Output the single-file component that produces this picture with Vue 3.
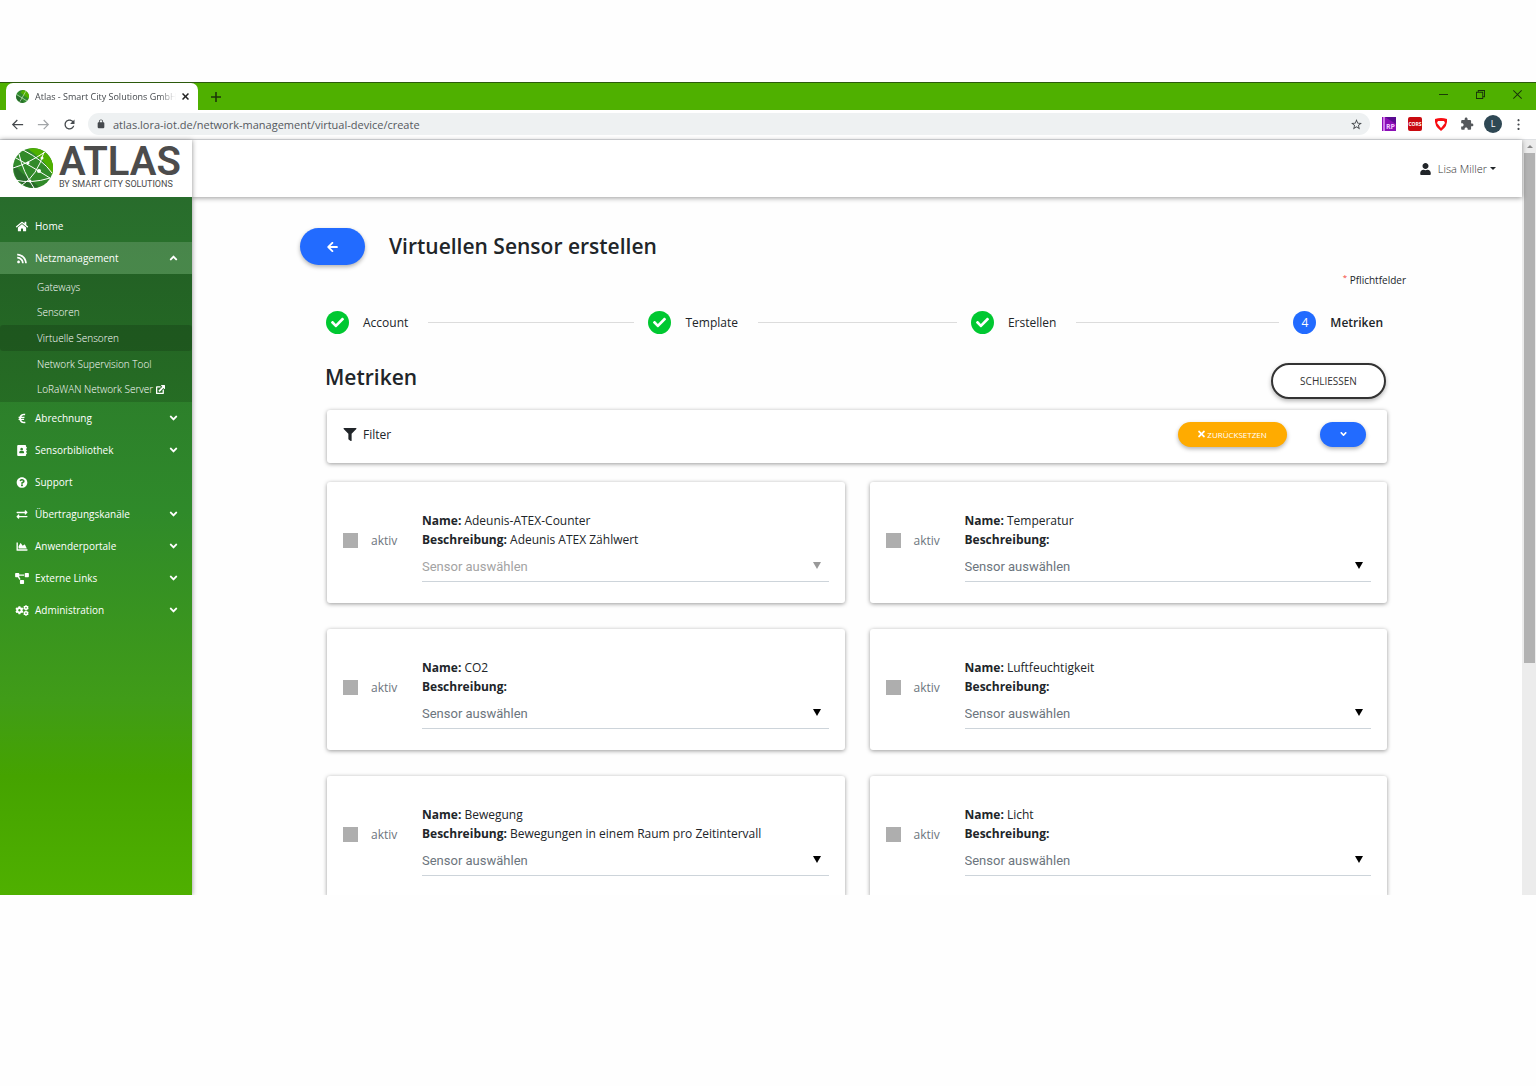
<template>
	<div class="screen">
		<div class="browser">
			<div class="tabstrip">
				<div class="tab">
					<svg class="favicon" viewBox="0 0 40 40" aria-hidden="true">
						<circle cx="20" cy="20" r="20" fill="#2f8a2c" />
						<path d="M22 0A20 20 0 0 1 39 26L26 18 14 8z" fill="#4fb000" />
						<path d="M1 16L14 24 24 39A20 20 0 0 1 1 16z" fill="#286c2a" />
						<path d="M2 14L34 34M12 36L30 4" stroke="#d5ead0" stroke-width="2" fill="none" />
					</svg>
					<span class="tab-title">Atlas - Smart City Solutions GmbH</span>
					<button class="plain" aria-label="Tab schließen"><Icon name="cross" class="tab-close" /></button>
				</div>
				<button class="plain newtab" aria-label="Neuer Tab"><Icon name="plus" /></button>
				<div class="window-buttons">
					<button class="plain" aria-label="Minimieren"><Icon name="minimize" /></button>
					<button class="plain" aria-label="Verkleinern"><Icon name="restore" /></button>
					<button class="plain" aria-label="Schließen"><Icon name="thincross" /></button>
				</div>
			</div>

			<div class="toolbar">
				<button class="plain nav" aria-label="Zurück"><Icon name="back" /></button>
				<button class="plain nav faded" aria-label="Vorwärts"><Icon name="forward" /></button>
				<button class="plain nav" aria-label="Neu laden"><Icon name="reload" /></button>
				<div class="address">
					<Icon name="lock" class="lock" />
					<input v-model="url" type="text" aria-label="Adresse" />
					<button class="plain" aria-label="Lesezeichen"><Icon name="star" class="star" /></button>
				</div>
				<div class="extensions">
					<svg viewBox="0 0 14 14" aria-hidden="true">
						<path d="M0 0h14v14H0z" fill="#8a0fb5" />
						<path d="M3 0h11v7z" fill="#5a0a91" />
						<path d="M1 0h2v14H1z" fill="#d07be8" />
						<text x="4" y="12" font-size="7" font-weight="700" fill="#f3c6ff">RP</text>
					</svg>
					<svg viewBox="0 0 14 14" aria-hidden="true">
						<rect width="14" height="14" rx="2" fill="#c90a10" />
						<text x="7" y="9" font-size="5" font-weight="700" text-anchor="middle" fill="#fff">CORS</text>
					</svg>
					<svg viewBox="0 0 14 14" aria-hidden="true">
						<path d="M1 2q6-2 12 0 1 7-6 12Q0 9 1 2z" fill="#f80d12" />
						<path d="M4 4h6l1 2-4 5-4-5z" fill="#fff" />
					</svg>
					<svg viewBox="0 0 24 24" aria-hidden="true"><path :d="icons.puzzle.d" fill="#55585c" /></svg>
				</div>
				<span class="profile">L</span>
				<button class="plain" aria-label="Menü"><Icon name="dots" class="dots" /></button>
			</div>

			<div class="viewport">
				<aside class="sidebar">
					<div class="logo">
						<svg class="globe" viewBox="0 0 40 40" aria-hidden="true">
							<circle cx="20" cy="20" r="20" fill="#318a2a" />
							<path d="M15 1A20 20 0 0 1 39 27Q34 17 29 12 22 6 15 1z" fill="#4fb000" />
							<path d="M1 17L9 25 18 32 26 39A20 20 0 0 1 1 17z" fill="#286c2a" />
							<g stroke="#fff" stroke-width="1" fill="none">
								<path d="M0 20Q14 16 32 4M6 6Q10 24 21 40M10 2Q30 12 39 25M9 37Q24 28 31 4M2 32Q18 36 37 30M3 10Q18 18 37 30" />
							</g>
							<g fill="#fff">
								<circle cx="15" cy="15" r="1.500" />
								<circle cx="26" cy="23" r="2" />
								<circle cx="29" cy="10" r="1.500" />
								<circle cx="17" cy="33" r="1.500" />
							</g>
						</svg>
						<div class="logo-text">
							<strong>ATLAS</strong>
							<span>BY SMART CITY SOLUTIONS</span>
						</div>
					</div>
					<nav>
						<template v-for="item in menu" :key="item.label">
							<a href="#" class="menu-item" :class="{ open: item.children }">
								<Icon :name="item.icon" class="menu-icon" />
								<span>{{ item.label }}</span>
								<Icon v-if="item.children" name="up" class="chevron" />
								<Icon v-else-if="item.expandable" name="down" class="chevron" />
							</a>
							<div v-if="item.children" class="submenu">
								<a v-for="child in item.children" :key="child" href="#" :class="{ current: child === 'Virtuelle Sensoren' }">
									{{ child }}
									<Icon v-if="child === 'LoRaWAN Network Server'" name="external" class="external" />
								</a>
							</div>
						</template>
					</nav>
				</aside>

				<div class="page">
					<header>
						<button class="plain user">
							<Icon name="user" class="user-icon" />
							<span>Lisa Miller</span>
							<i class="caret"></i>
						</button>
					</header>
					<main>
						<div class="title-row">
							<button class="pill back-button" aria-label="Zurück"><Icon name="arrowLeft" /></button>
							<h1>Virtuellen Sensor erstellen</h1>
						</div>
						<p class="required"><sup>*</sup> Pflichtfelder</p>

						<ol class="stepper">
							<li v-for="(step, i) in steps" :key="step" :class="{ active: i === 3 }">
								<span class="dot">
									<Icon v-if="i < 3" name="check" />
									<template v-else>{{ i + 1 }}</template>
								</span>
								<span>{{ step }}</span>
							</li>
						</ol>

						<div class="inner">
							<div class="section-head">
								<h2>Metriken</h2>
								<button class="pill close-button">SCHLIESSEN</button>
							</div>

							<div class="card filter">
								<Icon name="filter" class="filter-icon" />
								<span class="filter-label">Filter</span>
								<button class="pill reset"><Icon name="times" /> ZURÜCKSETZEN</button>
								<button class="pill expand" aria-label="Filter anzeigen"><Icon name="down" /></button>
							</div>

							<div class="metrics">
								<div v-for="(metric, i) in metrics" :key="metric.name" class="card metric">
									<label class="toggle">
										<input v-model="metric.active" type="checkbox" />
										<span>aktiv</span>
									</label>
									<div class="info">
										<p><b>Name:</b> {{ metric.name }}</p>
										<p><b>Beschreibung:</b> {{ metric.description }}</p>
										<div class="select" :class="{ disabled: metric.disabled }">
											<select :id="'sensor' + i" :disabled="metric.disabled" :aria-label="'Sensor für ' + metric.name">
												<option>Sensor auswählen</option>
											</select>
										</div>
									</div>
								</div>
							</div>
						</div>
					</main>
				</div>

				<div class="scrollbar">
					<i class="scroll-up"></i>
					<div class="thumb"></div>
				</div>
			</div>
		</div>
	</div>
</template>

<script setup>
import { h, reactive, ref } from 'vue';

const icons = {
	home: { w: 576, d: 'M280.37 148.26L96 300.11V464a16 16 0 0 0 16 16l112.06-.29a16 16 0 0 0 15.92-16V368a16 16 0 0 1 16-16h64a16 16 0 0 1 16 16v95.64a16 16 0 0 0 16 16.05L464 480a16 16 0 0 0 16-16V300L295.67 148.26a12.19 12.19 0 0 0-15.3 0zM571.6 251.47L488 182.56V44.05a12 12 0 0 0-12-12h-56a12 12 0 0 0-12 12v72.61L318.47 43a48 48 0 0 0-61 0L4.34 251.47a12 12 0 0 0-1.6 16.9l25.5 31A12 12 0 0 0 45.15 301l235.22-193.74a12.19 12.19 0 0 1 15.3 0L530.9 301a12 12 0 0 0 16.9-1.6l25.5-31a12 12 0 0 0-1.7-16.93z' },
	rss: { w: 448, d: 'M128.081 415.959c0 35.369-28.672 64.041-64.041 64.041S0 451.328 0 415.959s28.672-64.041 64.041-64.041 64.04 28.673 64.04 64.041zm175.66 47.25c-8.354-154.6-132.185-278.587-286.95-286.95C7.656 175.765 0 183.105 0 192.253v48.069c0 8.415 6.49 15.472 14.887 16.018 111.832 7.284 201.473 96.702 208.772 208.772.547 8.397 7.604 14.887 16.018 14.887h48.069c9.149.001 16.489-7.655 15.995-16.79zm144.249.288C439.596 229.677 251.465 40.445 16.503 32.01 7.473 31.686 0 38.981 0 48.016v48.068c0 8.625 6.835 15.645 15.453 15.999 191.179 7.839 344.627 161.316 352.465 352.465.353 8.618 7.373 15.453 15.999 15.453h48.068c9.034-.001 16.329-7.474 16.005-16.504z' },
	euro: { w: 320, d: 'M310.706 413.765c-1.314-6.63-7.835-10.872-14.424-9.369-10.692 2.439-27.422 5.413-45.426 5.413-56.763 0-101.929-34.79-121.461-85.449h113.689a12 12 0 0 0 11.708-9.369l6.373-28.36c1.686-7.502-4.019-14.631-11.708-14.631H115.22c-1.21-14.328-1.414-28.287.137-42.245H261.95a12 12 0 0 0 11.723-9.434l6.512-29.755c1.638-7.484-4.061-14.566-11.723-14.566H130.184c20.633-44.991 62.69-75.03 117.619-75.03 14.486 0 28.564 2.25 37.851 4.145 6.216 1.268 12.347-2.498 14.002-8.623l11.991-44.368c1.822-6.741-2.465-13.616-9.326-14.917C290.217 34.912 270.71 32 249.635 32 152.451 32 74.03 92.252 45.075 176H12c-6.627 0-12 5.373-12 12v29.755c0 6.627 5.373 12 12 12h21.569c-1.009 13.607-1.181 29.287-.181 42.245H12c-6.627 0-12 5.373-12 12v28.36c0 6.627 5.373 12 12 12h30.114C67.139 414.692 145.264 480 249.635 480c26.301 0 48.562-4.544 61.101-7.788 6.167-1.595 10.027-7.708 8.788-13.957l-8.818-44.49z' },
	book: { w: 448, d: 'M48 0h320a48 48 0 0 1 48 48v48h20q12 0 12 12v40q0 12-12 12h-20v64h20q12 0 12 12v40q0 12-12 12h-20v64h20q12 0 12 12v40q0 12-12 12h-20v48a48 48 0 0 1-48 48H48a48 48 0 0 1-48-48V48A48 48 0 0 1 48 0zM208 128a64 64 0 1 0 .1 0zM163 272c-35 4-67 28-67 70v22q0 20 22 20h180q22 0 22-20v-22c0-42-32-66-67-70q-45 22-90 0z' },
	question: { w: 512, d: 'M504 256c0 136.997-111.043 248-248 248S8 392.997 8 256C8 119.083 119.043 8 256 8s248 111.083 248 248zM262.655 90c-54.497 0-89.255 22.957-116.549 63.758-3.536 5.286-2.353 12.415 2.715 16.258l34.699 26.31c5.205 3.947 12.621 3.008 16.665-2.122 17.864-22.658 30.113-35.797 57.303-35.797 20.429 0 45.698 13.148 45.698 32.958 0 14.976-12.363 22.667-32.534 33.976C247.128 238.528 216 254.941 216 296v4c0 6.627 5.373 12 12 12h56c6.627 0 12-5.373 12-12v-1.333c0-28.462 83.186-29.647 83.186-106.667 0-58.002-60.165-102-116.531-102zM256 338c-25.365 0-46 20.635-46 46 0 25.364 20.635 46 46 46s46-20.636 46-46c0-25.365-20.635-46-46-46z' },
	exchange: { w: 512, d: 'M0 168v-16c0-13.255 10.745-24 24-24h360V80c0-21.367 25.899-32.042 40.971-16.971l80 80c9.372 9.373 9.372 24.569 0 33.941l-80 80C409.956 271.982 384 261.456 384 240v-48H24c-13.255 0-24-10.745-24-24zm488 152H128v-48c0-21.314-25.862-32.08-40.971-16.971l-80 80c-9.372 9.373-9.372 24.569 0 33.941l80 80C102.057 463.997 128 453.437 128 432v-48h360c13.255 0 24-10.745 24-24v-16c0-13.255-10.745-24-24-24z' },
	chart: { w: 512, d: 'M500 384c6.6 0 12 5.4 12 12v40c0 6.6-5.4 12-12 12H12c-6.6 0-12-5.4-12-12V76c0-6.6 5.4-12 12-12h40c6.6 0 12 5.4 12 12v308h436zM372.7 159.5L288 216l-85.3-113.7c-5.1-6.8-15.5-6.3-19.9 1L96 248v104h384l-89.9-187.8c-3.2-6.5-11.4-8.7-17.4-4.7z' },
	diagram: { w: 640, d: 'M384 320H256c-17.67 0-32 14.33-32 32v128c0 17.67 14.33 32 32 32h128c17.67 0 32-14.33 32-32V352c0-17.67-14.33-32-32-32zM192 32c0-17.67-14.33-32-32-32H32C14.33 0 0 14.33 0 32v128c0 17.67 14.33 32 32 32h95.72l73.16 128.04C211.98 300.98 232.4 288 256 288h.28L192 175.51V128h224V64H192V32zM608 0H480c-17.67 0-32 14.33-32 32v128c0 17.67 14.33 32 32 32h128c17.67 0 32-14.33 32-32V32c0-17.67-14.33-32-32-32z' },
	cogs: { w: 640, d: 'M156 56h86l10 50 40 23 48-17 43 74-38 34v46l38 34-43 74-48-17-40 23-10 50h-86l-10-50-40-23-48 17-43-74 38-34v-46l-38-34 43-74 48 17 40-23zM199 188a56 56 0 1 0 .1 0zM476 6h60l7 32 24 14 32-10 30 52-24 22v24l24 22-30 52-32-10-24 14-7 32h-60l-7-32-24-14-32 10-30-52 24-22v-24l-24-22 30-52 32 10 24-14zM506 96a32 32 0 1 0 .1 0zM476 262h60l7 32 24 14 32-10 30 52-24 22v24l24 22-30 52-32-10-24 14-7 32h-60l-7-32-24-14-32 10-30-52 24-22v-24l-24-22 30-52 32 10 24-14zM506 352a32 32 0 1 0 .1 0z' },
	external: { w: 512, d: 'M300 0h190q22 0 22 22v190q-8 24-32 10l-52-52-210 210q-14 12-28 0l-44-44q-12-14 0-28L356 98l-62-62q-14-26 6-36zM48 64h210v74H74v300h300V290l74-50v224q0 48-48 48H48q-48 0-48-48V112q0-48 48-48z' },
	filter: { w: 512, d: 'M487.976 0H24.028C2.71 0-8.047 25.866 7.058 40.971L192 225.941V432c0 7.831 3.821 15.17 10.237 19.662l80 55.98C298.02 518.69 320 507.493 320 487.98V225.941l184.947-184.97C520.021 25.896 509.338 0 487.976 0z' },
	user: { w: 448, d: 'M224 256c70.7 0 128-57.3 128-128S294.7 0 224 0 96 57.3 96 128s57.3 128 128 128zm89.6 32h-16.7c-22.2 10.2-46.9 16-72.9 16s-50.6-5.8-72.9-16h-16.7C60.2 288 0 348.2 0 422.4V464c0 26.5 21.5 48 48 48h352c26.5 0 48-21.5 48-48v-41.6c0-74.2-60.2-134.4-134.4-134.4z' },
	check: { w: 512, d: 'M173.898 439.404l-166.4-166.4c-9.997-9.997-9.997-26.206 0-36.204l36.203-36.204c9.997-9.998 26.207-9.998 36.204 0L192 312.69 432.095 72.596c9.997-9.997 26.207-9.997 36.204 0l36.203 36.204c9.997 9.997 9.997 26.206 0 36.204l-294.4 294.401c-9.998 9.997-26.207 9.997-36.204-.001z' },
	arrowLeft: { w: 448, d: 'M257.5 445.1l-22.2 22.2c-9.4 9.4-24.6 9.4-33.9 0L7 273c-9.4-9.4-9.4-24.6 0-33.9L201.4 44.7c9.4-9.4 24.6-9.4 33.9 0l22.2 22.2c9.5 9.5 9.3 25-.4 34.3L136.6 216H424c13.3 0 24 10.7 24 24v32c0 13.3-10.7 24-24 24H136.6l120.5 114.8c9.8 9.3 10 24.8.4 34.3z' },
	times: { w: 352, d: 'M242.72 256l100.07-100.07c12.28-12.28 12.28-32.19 0-44.48l-22.24-22.24c-12.28-12.28-32.19-12.28-44.48 0L176 189.28 75.93 89.21c-12.28-12.28-32.19-12.28-44.48 0L9.21 111.45c-12.28 12.28-12.28 32.19 0 44.48L109.28 256 9.21 356.07c-12.28 12.28-12.28 32.19 0 44.48l22.24 22.24c12.28 12.28 32.2 12.28 44.48 0L176 322.72l100.07 100.07c12.28 12.28 32.2 12.28 44.48 0l22.24-22.24c12.28-12.28 12.28-32.19 0-44.48L242.72 256z' },
	down: { w: 320, d: 'M143 352.3L7 216.3c-9.4-9.4-9.4-24.6 0-33.9l22.6-22.6c9.4-9.4 24.6-9.4 33.9 0l96.4 96.4 96.4-96.4c9.4-9.4 24.6-9.4 33.9 0l22.6 22.6c9.4 9.4 9.4 24.6 0 33.9l-136 136c-9.2 9.4-24.4 9.4-33.8 0z' },
	up: { w: 320, d: 'M177 159.7l136 136c9.4 9.4 9.4 24.6 0 33.9l-22.6 22.6c-9.4 9.4-24.6 9.4-33.9 0L160 255.9l-96.4 96.4c-9.4 9.4-24.6 9.4-33.9 0L7 329.7c-9.4-9.4-9.4-24.6 0-33.9l136-136c9.4-9.5 24.6-9.5 34-.1z' },
	back: { w: 24, h: 24, d: 'M21 11H6.8l5.6-5.6L11 4l-8 8 8 8 1.4-1.4L6.8 13H21v-2z' },
	forward: { w: 24, h: 24, d: 'M3 11h14.2l-5.6-5.6L13 4l8 8-8 8-1.4-1.4 5.6-5.6H3v-2z' },
	reload: { w: 24, h: 24, d: 'M17.65 6.35C16.2 4.9 14.21 4 12 4c-4.42 0-7.99 3.58-7.99 8s3.57 8 7.99 8c3.73 0 6.84-2.55 7.73-6h-2.08c-.82 2.33-3.04 4-5.65 4-3.31 0-6-2.69-6-6s2.69-6 6-6c1.66 0 3.14.69 4.22 1.78L13 11h7V4l-2.35 2.35z' },
	lock: { w: 24, h: 24, d: 'M18 8h-1V6c0-2.76-2.24-5-5-5S7 3.24 7 6v2H6c-1.1 0-2 .9-2 2v10c0 1.1.9 2 2 2h12c1.1 0 2-.9 2-2V10c0-1.1-.9-2-2-2zM9 8V6c0-1.66 1.34-3 3-3s3 1.34 3 3v2H9z' },
	star: { w: 24, h: 24, d: 'M22 9.24l-7.19-.62L12 2 9.19 8.63 2 9.24l5.46 4.73L5.82 21 12 17.27 18.18 21l-1.63-7.03L22 9.24zM12 15.4l-3.76 2.27 1-4.28-3.32-2.88 4.38-.38L12 6.1l1.71 4.04 4.38.38-3.32 2.88 1 4.28L12 15.4z' },
	puzzle: { w: 24, h: 24, d: 'M20.5 11H19V7c0-1.1-.9-2-2-2h-4V3.5C13 2.12 11.88 1 10.5 1S8 2.12 8 3.5V5H4c-1.1 0-1.99.9-1.99 2v3.8H3.5c1.49 0 2.7 1.21 2.7 2.7s-1.21 2.7-2.7 2.7H2V20c0 1.1.9 2 2 2h3.8v-1.5c0-1.49 1.21-2.7 2.7-2.7 1.49 0 2.7 1.21 2.7 2.7V22H17c1.1 0 2-.9 2-2v-4h1.5c1.38 0 2.5-1.12 2.5-2.5S21.88 11 20.5 11z' },
	dots: { w: 24, h: 24, d: 'M12 2a2 2 0 1 0 .1 0zM12 10a2 2 0 1 0 .1 0zM12 18a2 2 0 1 0 .1 0z' },
	cross: { w: 10, h: 10, d: 'M1.5 0L5 3.5 8.5 0 10 1.5 6.5 5 10 8.5 8.5 10 5 6.5 1.5 10 0 8.5 3.5 5 0 1.5z' },
	plus: { w: 10, h: 10, d: 'M4.2 0h1.6v4.2H10v1.6H5.8V10H4.200V5.800H0V4.200h4.200z' },
	minimize: { w: 10, h: 10, d: 'M0 4.5h10v1H0z' },
	restore: { w: 10, h: 10, d: 'M2 0h8v8H8v2H0V2h2zM3 1v1h5v5h1V1zM1 3v6h6V3z' },
	thincross: { w: 10, h: 10, d: 'M.7 0L5 4.3 9.3 0l.7.7L5.700 5 10 9.300l-.7.7L5 5.700.7 10 0 9.300 4.300 5 0 .7z' },
};

const Icon = ({ name }) => h('svg', {
	viewBox: `0 0 ${icons[name].w} ${icons[name].h || 512}`,
	fill: 'currentColor',
	'fill-rule': 'evenodd',
	'aria-hidden': 'true',
}, [h('path', { d: icons[name].d })]);
Icon.props = ['name'];

const url = ref('atlas.lora-iot.de/network-management/virtual-device/create');

const menu = [
	{ label: 'Home', icon: 'home' },
	{
		label: 'Netzmanagement',
		icon: 'rss',
		children: ['Gateways', 'Sensoren', 'Virtuelle Sensoren', 'Network Supervision Tool', 'LoRaWAN Network Server'],
	},
	{ label: 'Abrechnung', icon: 'euro', expandable: true },
	{ label: 'Sensorbibliothek', icon: 'book', expandable: true },
	{ label: 'Support', icon: 'question' },
	{ label: 'Übertragungskanäle', icon: 'exchange', expandable: true },
	{ label: 'Anwenderportale', icon: 'chart', expandable: true },
	{ label: 'Externe Links', icon: 'diagram', expandable: true },
	{ label: 'Administration', icon: 'cogs', expandable: true },
];

const steps = ['Account', 'Template', 'Erstellen', 'Metriken'];

const metrics = reactive([
	{ name: 'Adeunis-ATEX-Counter', description: 'Adeunis ATEX Zählwert', active: false, disabled: true },
	{ name: 'Temperatur', description: '', active: false },
	{ name: 'CO2', description: '', active: false },
	{ name: 'Luftfeuchtigkeit', description: '', active: false },
	{ name: 'Bewegung', description: 'Bewegungen in einem Raum pro Zeitintervall', active: false },
	{ name: 'Licht', description: '', active: false },
]);
</script>

<style>
body {
	margin: 0;
	background: #fefefe;
}
</style>

<style scoped>
* {
	box-sizing: border-box;
}

.screen {
	height: 100vh;
	padding: 82px 0 191px;
	font-family: "Open Sans", "Noto Sans", sans-serif;
	font-size: 12px;
	color: #212529;
}

.browser {
	height: 100%;
	display: flex;
	flex-direction: column;
	overflow: hidden;
	background: #fff;
}

button, input, select {
	font-family: inherit;
}

button {
	cursor: pointer;
}

svg {
	display: block;
	flex: none;
}

a {
	color: inherit;
	text-decoration: none;
}

.plain {
	border: none;
	background: none;
	padding: 0;
	color: inherit;
}

/* browser frame */
.tabstrip {
	height: 28px;
	flex: none;
	display: flex;
	align-items: center;
	padding-left: 6px;
	background: #4fb000;
	border-top: 1px solid #2c5a0c;
}

.tab {
	align-self: stretch;
	width: 192px;
	display: flex;
	align-items: center;
	padding: 0 9px 1px 10px;
	background: #fff;
	border-radius: 7px 7px 0 0;
	font-size: 9px;
	color: #45494d;
}

.favicon {
	width: 13px;
	height: 13px;
	margin-right: 6px;
}

.tab-title {
	flex: 1;
	overflow: hidden;
	white-space: nowrap;
	margin-right: 6px;
	mask-image: linear-gradient(to right, #000 88%, transparent);
}

.tab-close {
	width: 7px;
	height: 7px;
	color: #222;
}

.newtab {
	margin-left: 13px;
}

.newtab svg {
	width: 10px;
	height: 10px;
	color: #1d3608;
}

.window-buttons {
	margin-left: auto;
	display: flex;
	gap: 28px;
	padding: 0 14px 4px 0;
	color: #17300a;
}

.window-buttons svg {
	width: 9px;
	height: 9px;
}

.toolbar {
	height: 30px;
	flex: none;
	display: flex;
	align-items: center;
	padding: 0 11px 1px 10px;
	border-bottom: 1px solid #dfe1e4;
	color: #45494d;
}

.nav {
	margin-right: 11px;
}

.nav svg {
	width: 15px;
	height: 15px;
}

.faded {
	color: #a3a6a9;
}

.address {
	flex: 1;
	height: 22px;
	display: flex;
	align-items: center;
	padding: 0 7px 0 8px;
	background: #eef1f2;
	border-radius: 11px;
}

.lock {
	width: 10px;
	height: 10px;
	margin-right: 7px;
}

.address input {
	flex: 1;
	border: none;
	outline: none;
	background: none;
	padding: 0;
	font-size: 11px;
	color: #55595e;
}

.star {
	width: 13px;
	height: 13px;
}

.extensions {
	display: flex;
	gap: 12px;
	margin: 0 10px 0 12px;
}

.extensions svg {
	width: 14px;
	height: 14px;
}

.profile {
	width: 18px;
	height: 18px;
	margin-right: 10px;
	border-radius: 50%;
	background: #2f4854;
	color: #fff;
	font-size: 9px;
	line-height: 18px;
	text-align: center;
}

.dots {
	width: 13px;
	height: 13px;
}

.viewport {
	flex: 1;
	min-height: 0;
	display: flex;
}

/* sidebar */
.sidebar {
	width: 192px;
	flex: none;
	display: flex;
	flex-direction: column;
	box-shadow: 0 0 5px rgba(0, 0, 0, 0.45);
	z-index: 2;
}

.logo {
	height: 57px;
	display: flex;
	align-items: center;
	gap: 6px;
	padding: 0 0 2px 13px;
	background: #fff;
	color: #4c4c4c;
}

.globe {
	width: 40px;
	height: 40px;
}

.logo-text {
	font-family: Roboto, sans-serif;
}

.logo-text strong {
	display: block;
	font-size: 40px;
	font-weight: 600;
	line-height: 33px;
}

.logo-text span {
	display: block;
	font-size: 9px;
	line-height: 12px;
	white-space: nowrap;
}

nav {
	flex: 1;
	padding-top: 13px;
	background: linear-gradient(#286c2c, #2f8a2a 45%, #409c18 72%, #45a300 83%, #4fb000);
	color: #fff;
	font-size: 10px;
}

.menu-item {
	height: 32px;
	display: flex;
	align-items: center;
	padding: 0 14px 0 15px;
}

.menu-item span {
	flex: 1;
}

.menu-item.open {
	background: rgba(255, 255, 255, 0.15);
}

.menu-icon {
	height: 11px;
	width: 14px;
	margin-right: 6px;
}

.chevron {
	height: 12px;
	width: 9px;
}

.submenu {
	height: 128px;
	display: flex;
	flex-direction: column;
	background: rgba(0, 0, 0, 0.15);
}

.submenu a {
	flex: 1;
	display: flex;
	align-items: center;
	gap: 3px;
	padding-left: 37px;
	font-weight: 300;
}

.submenu .current {
	background: rgba(0, 0, 0, 0.15);
	border-radius: 3px;
}

.external {
	width: 9px;
	height: 9px;
}

/* page */
.page {
	flex: 1;
	min-width: 0;
	display: flex;
	flex-direction: column;
}

header {
	height: 57px;
	flex: none;
	display: flex;
	justify-content: flex-end;
	align-items: center;
	padding-right: 26px;
	background: #fff;
	box-shadow: 0 1px 5px rgba(0, 0, 0, 0.4);
	z-index: 1;
}

.user {
	display: flex;
	align-items: center;
	font-size: 11px;
	font-weight: 300;
	color: #333;
}

.user-icon {
	width: 11px;
	height: 12px;
	margin-right: 7px;
	color: #212529;
}

.caret {
	margin-left: 3px;
	border: 3px solid transparent;
	border-top-color: #212529;
	border-bottom: none;
}

main {
	flex: 1;
	min-height: 0;
	overflow: hidden;
	padding: 31px 108px 0;
	background: #fefefe;
}

.title-row {
	display: flex;
	align-items: center;
	gap: 24px;
}

h1, h2 {
	margin: 0;
	font-size: 21px;
	font-weight: 600;
	line-height: 29px;
}

.pill {
	border: none;
	border-radius: 20px;
	background: #226bff;
	color: #fff;
	display: flex;
	align-items: center;
	justify-content: center;
	box-shadow: 0 2px 4px rgba(0, 0, 0, 0.3);
}

.back-button {
	width: 65px;
	height: 37px;
}

.back-button svg {
	width: 11px;
	height: 12px;
}

.required {
	margin: 6px 8px 0;
	text-align: right;
	font-size: 10px;
	line-height: 18px;
}

.required sup {
	color: #f44336;
	font-size: 8px;
	line-height: 8px;
}

.stepper {
	display: flex;
	list-style: none;
	margin: 22px 31px 0 26px;
	padding: 0;
}

.stepper li {
	flex: 1;
	display: flex;
	align-items: center;
	line-height: 23px;
}

.stepper li:last-child {
	flex: none;
}

.stepper li:not(:last-child)::after {
	content: "";
	flex: 1;
	height: 1px;
	margin: 0 14px 0 20px;
	background: #dcdcdc;
}

.dot {
	width: 23px;
	height: 23px;
	margin-right: 14px;
	display: flex;
	align-items: center;
	justify-content: center;
	border-radius: 50%;
	background: #00c831;
	color: #fff;
}

.dot svg {
	width: 13px;
	height: 13px;
}

.active {
	font-weight: 600;
}

.active .dot {
	background: #226bff;
	font-weight: 400;
}

.inner {
	padding: 0 27px;
}

.section-head {
	display: flex;
	justify-content: space-between;
	align-items: flex-start;
	margin: 29px 1px 11px -2px;
}

.close-button {
	width: 115px;
	height: 36px;
	border: 2px solid #333;
	background: #fff;
	color: #333;
	font-size: 10px;
}

.card {
	background: #fff;
	border-radius: 3px;
	box-shadow: 0 1px 4px rgba(0, 0, 0, 0.4);
}

.filter {
	height: 53px;
	display: flex;
	align-items: center;
	padding: 0 21px 5px 16px;
}

.filter-icon {
	width: 14px;
	height: 13px;
	margin-right: 6px;
}

.filter-label {
	flex: 1;
}

.reset, .expand {
	height: 25px;
	font-size: 8px;
}

.reset {
	width: 109px;
	gap: 2px;
	margin-right: 33px;
	background: #ffab00;
}

.reset svg {
	width: 7px;
	height: 10px;
}

.expand {
	width: 46px;
}

.expand svg {
	width: 7px;
	height: 10px;
}

.metrics {
	display: grid;
	grid-template-columns: 1fr 1fr;
	gap: 26px 25px;
	margin-top: 19px;
}

.metric {
	display: flex;
	padding: 29px 16px 21px;
}

.toggle {
	width: 79px;
	flex: none;
	height: 58px;
	display: flex;
	align-items: center;
	color: #6c757d;
}

.toggle input {
	appearance: none;
	width: 15px;
	height: 15px;
	margin: 0 13px 0 0;
	background: #aeaeae;
}

.toggle input:checked {
	background: #226bff;
}

.info {
	flex: 1;
	min-width: 0;
}

.info p {
	margin: 0;
	line-height: 19px;
}

.select {
	position: relative;
	margin-top: 3px;
}

.select::after {
	content: "";
	position: absolute;
	right: 8px;
	top: 10px;
	border: 4px solid transparent;
	border-top: 7px solid #000;
	border-bottom: none;
	pointer-events: none;
}

.select select {
	appearance: none;
	display: block;
	width: 100%;
	height: 30px;
	padding: 0;
	border: none;
	border-bottom: 1px solid #cdd4da;
	border-radius: 0;
	background: none;
	font-family: Roboto, sans-serif;
	font-size: 13px;
	color: #6c757d;
}

.select.disabled select {
	color: #a3a3a3;
	opacity: 1;
}

.select.disabled::after {
	border-top-color: #999;
}

/* scrollbar */
.scrollbar {
	width: 14px;
	flex: none;
	padding: 5px 1px 0 2px;
	background: #ececec;
}

.scroll-up {
	display: block;
	width: 0;
	margin: 0 auto 5px;
	border: 3px solid transparent;
	border-bottom-color: #888;
	border-top: none;
}

.thumb {
	height: 68%;
	background: #b2b2b2;
}
</style>
